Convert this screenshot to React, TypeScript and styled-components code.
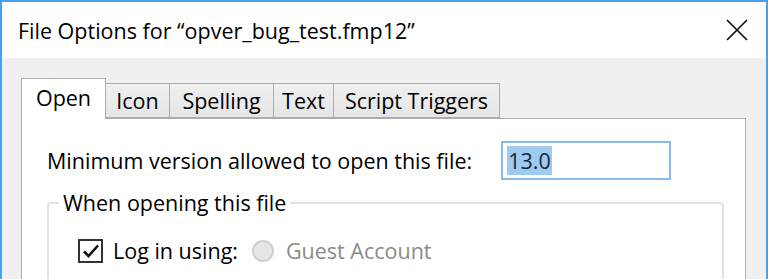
import React from "react";
import styled, { createGlobalStyle } from "styled-components";

const Global = createGlobalStyle`
  html, body { margin: 0; padding: 0; background: #ffffff; }
  body { font-family: "Open Sans", "Noto Sans", sans-serif; }
  * { box-sizing: border-box; }
`;

const FONT = "21.5px";

const Window = styled.div`
  width: 768px;
  height: 279px;
  overflow: hidden;
  border: 2px solid #4a9fe6;
  border-bottom: none;
  display: flex;
  flex-direction: column;
  background: #f0f0f0;
`;

const TitleBar = styled.div`
  height: 56px;
  flex: none;
  background: #ffffff;
  display: flex;
  align-items: center;
  padding-left: 16px;
`;

const Title = styled.div`
  flex: 1;
  font-size: ${FONT};
  color: #000;
  white-space: nowrap;
`;

const CloseButton = styled.div`
  width: 58px;
  height: 56px;
  display: flex;
  align-items: center;
  justify-content: center;
`;

const Body = styled.div`
  flex: none;
  display: flex;
  flex-direction: column;
  padding: 20px 20px 0 19px;
`;

const TabStrip = styled.div`
  display: flex;
  align-items: flex-end;
  height: 40px;
`;

const Tab = styled.div<{ $w: number; $active?: boolean }>`
  position: relative;
  width: ${(p) => p.$w}px;
  height: ${(p) => (p.$active ? 41 : 35)}px;
  margin-left: -1px;
  margin-bottom: ${(p) => (p.$active ? -1 : 0)}px;
  z-index: ${(p) => (p.$active ? 2 : 1)};
  border: 1px solid #acacac;
  border-bottom: ${(p) => (p.$active ? "none" : "1px solid #acacac")};
  background: ${(p) => (p.$active ? "#ffffff" : "linear-gradient(#f0f0f0, #e5e5e5)")};
  display: flex;
  align-items: ${(p) => (p.$active ? "flex-start" : "center")};
  padding-top: ${(p) => (p.$active ? 4 : 0)}px;
  justify-content: center;
  font-size: ${FONT};
  color: #000;
  white-space: nowrap;
  &:first-child { margin-left: 0; }
`;

const Panel = styled.div`
  height: 240px;
  background: #ffffff;
  border: 1px solid #acacac;
  padding: 22px 21px 0 25px;
  display: flex;
  flex-direction: column;
`;

const VersionRow = styled.div`
  display: flex;
  align-items: center;
  height: 39px;
`;

const Label = styled.span<{ $disabled?: boolean }>`
  font-size: ${FONT};
  color: ${(p) => (p.$disabled ? "#8a8a8a" : "#000")};
  white-space: nowrap;
`;

const VersionInput = styled.div`
  margin-left: 29px;
  width: 170px;
  height: 39px;
  border: 2px solid #86bbea;
  background: #fff;
  display: flex;
  align-items: center;
  padding-left: 4px;
`;

const Selection = styled.span`
  background: #9fcbf0;
  font-size: ${FONT};
  color: #1a2638;
  line-height: 29px;
  padding: 0 1px;
`;

const Group = styled.fieldset`
  margin: 9px 0 0 0;
  padding: 0;
  border: 2px solid #dde5ea;
  border-radius: 4px;
  height: 140px;
`;

const Legend = styled.legend`
  margin-left: 10px;
  padding: 0 4px;
  font-size: ${FONT};
  line-height: 28px;
  color: #000;
`;

const GroupContent = styled.div`
  padding: 19px 0 0 29px;
`;

const OptionRow = styled.div`
  display: flex;
  align-items: center;
  gap: 10px;
`;

const CheckBox = styled.div`
  width: 25px;
  height: 24px;
  border: 2px solid #333;
  background: #fff;
  display: flex;
  align-items: center;
  justify-content: center;
`;

const Radio = styled.div`
  width: 22px;
  height: 22px;
  border-radius: 50%;
  border: 2px solid #cfcfcf;
  background: #e6e6e6;
  margin-left: 4px;
  margin-right: 2px;
`;

export default function App() {
  return (
    <>
      <Global />
      <Window>
        <TitleBar>
          <Title>File Options for “opver_bug_test.fmp12”</Title>
          <CloseButton>
            <svg width="22" height="22" viewBox="0 0 22 22">
              <path d="M1 1 L21 21 M21 1 L1 21" stroke="#111" strokeWidth="1.7" fill="none" />
            </svg>
          </CloseButton>
        </TitleBar>
        <Body>
          <TabStrip>
            <Tab $w={85} $active>Open</Tab>
            <Tab $w={65}>Icon</Tab>
            <Tab $w={105}>Spelling</Tab>
            <Tab $w={61}>Text</Tab>
            <Tab $w={167}>Script Triggers</Tab>
          </TabStrip>
          <Panel>
            <VersionRow>
              <Label>Minimum version allowed to open this file:</Label>
              <VersionInput>
                <Selection>13.0</Selection>
              </VersionInput>
            </VersionRow>
            <Group>
              <Legend>When opening this file</Legend>
              <GroupContent>
                <OptionRow>
                  <CheckBox>
                    <svg width="18" height="16" viewBox="0 0 18 16">
                      <path d="M2 8.5 L6.5 13 L16 2.5" stroke="#111" strokeWidth="2.6" fill="none" />
                    </svg>
                  </CheckBox>
                  <Label>Log in using:</Label>
                  <Radio />
                  <Label $disabled>Guest Account</Label>
                </OptionRow>
              </GroupContent>
            </Group>
          </Panel>
        </Body>
      </Window>
    </>
  );
}
